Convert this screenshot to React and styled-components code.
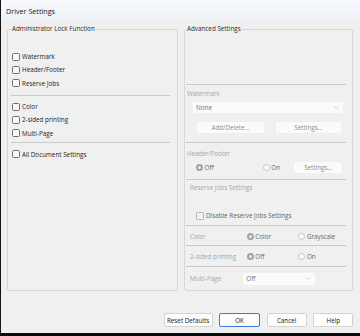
import React from 'react';
import styled, { createGlobalStyle } from 'styled-components';

const Global = createGlobalStyle`
  html, body { margin: 0; padding: 0; background: #f0f0f0; }
  body { font-family: "Segoe UI", "Open Sans", "Noto Sans", sans-serif; }
  * { box-sizing: border-box; }
`;

const Window = styled.div`
  width: 360px;
  height: 336px;
  display: flex;
  flex-direction: column;
  background: #f0f0f0;
  border-left: 1px solid #151515;
  border-bottom: 3px solid #0c0c0c;
  overflow: hidden;
  color: #1f1f1f;
  font-size: 6.3px;
`;

const TitleBar = styled.div`
  height: 19px;
  flex: none;
  display: flex;
  align-items: center;
  padding: 2px 0 0 5px;
  background: linear-gradient(#f7f9fd, #eef2f9);
  font-size: 7.2px;
  color: #1a1a1a;
`;

const Body = styled.div`
  padding: 6px 7px 0 6px;
  display: grid;
  grid-template-columns: 171px 169px;
  column-gap: 6px;
`;

const Group = styled.fieldset`
  margin: 0;
  padding: 0;
  min-width: 0;
  height: 266px;
  border: 1px solid #d7d7d7;
  border-radius: 2px;
  display: flex;
  flex-direction: column;
`;

const Legend = styled.legend`
  margin-left: ${p => p.$indent}px;
  padding: 0 1px;
  line-height: 8px;
  font-size: 6.3px;
  color: #2a2a2a;
`;

const Column = styled.div`
  display: flex;
  flex-direction: column;
  padding-left: ${p => p.$pl || 0}px;
`;

const Separator = styled.div`
  height: 1px;
  flex: none;
  background: #cacaca;
  margin-top: ${p => p.$mt}px;
  margin-left: ${p => p.$ml}px;
  width: ${p => p.$w}px;
`;

const CheckRow = styled.label`
  display: flex;
  align-items: center;
  gap: 2px;
  height: ${p => p.$h || 13.33}px;
  margin-top: ${p => p.$mt || 0}px;
  padding-left: ${p => p.$pl || 0}px;
  color: ${p => (p.$disabled ? '#666' : '#1e1e1e')};
`;

const Box = styled.span`
  width: 8px;
  height: 8px;
  flex: none;
  border-radius: 1.5px;
  border: 1px solid ${p => (p.$disabled ? '#b3b3b3' : '#707070')};
  background: ${p => (p.$disabled ? '#f4f4f4' : '#f8f8f8')};
`;

const DimLabel = styled.div`
  height: ${p => p.$h}px;
  margin-top: ${p => p.$mt}px;
  padding-left: ${p => p.$pl}px;
  display: flex;
  align-items: center;
  color: #a6a6a6;
`;

const Select = styled.div`
  height: ${p => p.$h}px;
  width: ${p => p.$w}px;
  margin-top: ${p => p.$mt || 0}px;
  margin-left: ${p => p.$ml || 0}px;
  background: #fbfbfb;
  border-radius: 1.5px;
  display: flex;
  align-items: center;
  justify-content: space-between;
  padding: 0 4px 0 3px;
  color: #6f6f6f;
`;

const Chevron = () => (
  <svg width="5" height="3" viewBox="0 0 5 3">
    <polyline points="0.4,0.4 2.5,2.5 4.6,0.4" fill="none" stroke="#b5b5b5" strokeWidth="0.6" />
  </svg>
);

const ButtonRow = styled.div`
  display: flex;
  align-items: center;
  height: ${p => p.$h}px;
  margin-top: ${p => p.$mt}px;
  padding-left: ${p => p.$pl}px;
  gap: ${p => p.$gap || 0}px;
`;

const DimButton = styled.div`
  width: ${p => p.$w}px;
  height: ${p => p.$h}px;
  flex: none;
  background: #fbfbfb;
  border: 1px solid #eeeeee;
  border-radius: 2px;
  display: flex;
  align-items: center;
  justify-content: center;
  color: #8c8c8c;
`;

const RadioItem = styled.div`
  display: flex;
  align-items: center;
  gap: 1.6px;
  width: ${p => p.$w}px;
  flex: none;
  color: #666;
`;

const RadioDot = styled.span`
  width: 7px;
  height: 7px;
  flex: none;
  border-radius: 50%;
  border: ${p => (p.$on ? '2px solid #a3a3a3' : '1px solid #c6c6c6')};
  background: ${p => (p.$on ? '#ebebeb' : '#fbfbfb')};
`;

const OptionRow = styled.div`
  display: flex;
  align-items: center;
  height: ${p => p.$h}px;
  margin-top: ${p => p.$mt}px;
  padding-left: 5px;
`;

const OptionLabel = styled.span`
  width: ${p => p.$w}px;
  flex: none;
  color: #a6a6a6;
`;

const Footer = styled.div`
  margin-top: auto;
  display: flex;
  justify-content: flex-end;
  gap: 6.7px;
  padding: 0 6.7px 5.7px 0;
`;

const Button = styled.button`
  width: ${p => p.$w}px;
  height: 14px;
  padding: 0;
  font: inherit;
  font-size: 6.3px;
  color: #1b1b1b;
  background: #fdfdfd;
  border: 1px solid ${p => (p.$primary ? '#3a7bd0' : '#d3d3d3')};
  border-radius: 2px;
`;

const Radio = ({ on, w, children }) => (
  <RadioItem $w={w}>
    <RadioDot $on={on} />
    <span>{children}</span>
  </RadioItem>
);

const Check = ({ children, ...rest }) => (
  <CheckRow {...rest}>
    <Box $disabled={rest.$disabled} />
    <span>{children}</span>
  </CheckRow>
);

export default function App() {
  return (
    <>
      <Global />
      <Window>
        <TitleBar>Driver Settings</TitleBar>
        <Body>
          <Group>
            <Legend $indent={3}>Administrator Lock Function</Legend>
            <Column $pl={4}>
              <Check $mt={17}>Watermark</Check>
              <Check>Header/Footer</Check>
              <Check>Reserve Jobs</Check>
              <Separator $mt={5.5} $ml={-1} $w={159} />
              <Check $mt={3.5}>Color</Check>
              <Check>2-sided printing</Check>
              <Check>Multi-Page</Check>
              <Separator $mt={2.5} $ml={-1} $w={159} />
              <Check $mt={4.2}>All Document Settings</Check>
            </Column>
          </Group>
          <Group>
            <Legend $indent={1}>Advanced Settings</Legend>
            <Column>
              <Separator $mt={51} $ml={1} $w={160} />
              <DimLabel $h={11} $mt={3} $pl={2}>Watermark</DimLabel>
              <Select $h={11} $w={150} $mt={2.5} $ml={8}>
                <span>None</span>
                <Chevron />
              </Select>
              <ButtonRow $h={13} $mt={8} $pl={11} $gap={10}>
                <DimButton $w={69} $h={13}>Add/Delete...</DimButton>
                <DimButton $w={67} $h={13}>Settings...</DimButton>
              </ButtonRow>
              <Separator $mt={8.5} $ml={1} $w={160} />
              <DimLabel $h={10} $mt={5.3} $pl={2}>Header/Footer</DimLabel>
              <ButtonRow $h={13} $mt={2.5} $pl={11}>
                <Radio on w={66.7}>Off</Radio>
                <Radio w={30.6}>On</Radio>
                <DimButton $w={50} $h={12.6}>Settings...</DimButton>
              </ButtonRow>
              <Separator $mt={5.2} $ml={1} $w={160} />
              <DimLabel $h={10} $mt={3} $pl={5}>Reserve Jobs Settings</DimLabel>
              <Check $disabled $h={10} $mt={18} $pl={11}>Disable Reserve Jobs Settings</Check>
              <Separator $mt={4} $ml={1} $w={160} />
              <OptionRow $h={11} $mt={5}>
                <OptionLabel $w={56.7}>Color</OptionLabel>
                <Radio on w={51.6}>Color</Radio>
                <Radio w={50}>Grayscale</Radio>
              </OptionRow>
              <Separator $mt={3.5} $ml={1} $w={160} />
              <OptionRow $h={11} $mt={4.5}>
                <OptionLabel $w={56.7}>2-sided printing</OptionLabel>
                <Radio on w={51.6}>Off</Radio>
                <Radio w={50}>On</Radio>
              </OptionRow>
              <Separator $mt={4.5} $ml={1} $w={160} />
              <OptionRow $h={12} $mt={5.5}>
                <OptionLabel $w={53.3}>Multi-Page</OptionLabel>
                <Select $h={11.7} $w={71.7}>
                  <span>Off</span>
                  <Chevron />
                </Select>
              </OptionRow>
            </Column>
          </Group>
        </Body>
        <Footer>
          <Button $w={49}>Reset Defaults</Button>
          <Button $w={40.7} $primary>OK</Button>
          <Button $w={40}>Cancel</Button>
          <Button $w={40}>Help</Button>
        </Footer>
      </Window>
    </>
  );
}
